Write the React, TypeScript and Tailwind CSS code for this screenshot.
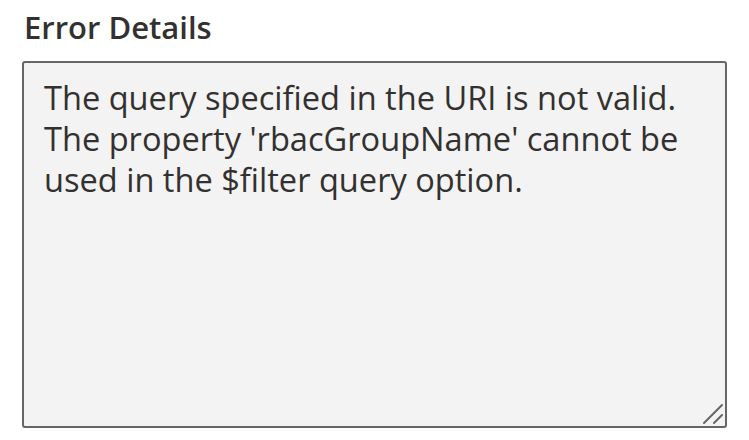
export default function App() {
  return (
    <div className="min-h-screen bg-white px-[22px] pt-[6px]" style={{ fontFamily: '"Open Sans", "Noto Sans", sans-serif' }}>
      <h2 className="pl-[2px] text-[31px] font-semibold leading-[42px] text-[#323130]">Error Details</h2>
      <div className="relative mt-[13px] h-[367px] w-[705px]">
        <textarea
          readOnly
          className="block h-full w-full resize-none rounded-[3px] border-2 border-[#666666] bg-[#f3f3f3] px-[20px] pt-[14px] text-[32.6px] leading-[41px] text-[#323130] outline-none"
          value="The query specified in the URI is not valid. The property 'rbacGroupName' cannot be used in the $filter query option."
        />
        <svg className="pointer-events-none absolute right-[3px] bottom-[3px]" width="22" height="22" viewBox="0 0 22 22">
          <path d="M2 20 L20 2 M12 20 L20 12" stroke="#666666" strokeWidth="2" strokeLinecap="round" />
        </svg>
      </div>
    </div>
  );
}
